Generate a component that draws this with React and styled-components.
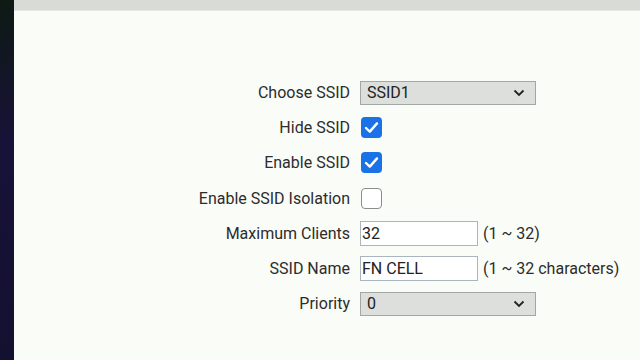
import React from 'react'
import styled, { createGlobalStyle } from 'styled-components'

const GlobalStyle = createGlobalStyle`
  html, body {
    margin: 0;
    padding: 0;
    background: #fafcf8;
  }
  body {
    font-family: Roboto, "Noto Sans", sans-serif;
    color: #2a2a2a;
  }
`

const Screen = styled.div`
  display: flex;
  width: 640px;
  height: 360px;
  overflow: hidden;
`

const Edge = styled.div`
  width: 14px;
  flex-shrink: 0;
  background: linear-gradient(180deg, #0e1a14 0%, #171238 40%, #141030 100%);
`

const Main = styled.div`
  flex: 1;
  display: flex;
  flex-direction: column;
  background: #fafcf8;
`

const TopBar = styled.div`
  height: 10px;
  background: #d8dbd6;
  border-bottom: 1px solid #e4e7e2;
`

const Form = styled.div`
  display: grid;
  grid-template-columns: 336px 1fr;
  grid-auto-rows: 35.2px;
  column-gap: 10px;
  align-items: center;
  margin-top: 64px;
`

const Label = styled.div`
  justify-self: end;
  font-size: 16px;
  color: #2c2c2c;
  white-space: nowrap;
`

const Field = styled.div`
  display: flex;
  align-items: center;
  gap: 5px;
`

const Select = styled.div`
  box-sizing: border-box;
  width: 176px;
  height: 24px;
  display: flex;
  align-items: center;
  justify-content: space-between;
  padding: 0 10px 0 6px;
  background: #dcdfdb;
  border: 1px solid #a3a7a3;
  font-size: 16px;
  color: #222;
`

const Input = styled.div`
  box-sizing: border-box;
  width: 118px;
  height: 25px;
  display: flex;
  align-items: center;
  padding: 0 1px;
  background: #fff;
  border: 1px solid #a9b6c0;
  font-size: 16px;
  color: #222;
`

const Hint = styled.span`
  font-size: 16px;
  color: #2c2c2c;
`

const Box = styled.div`
  box-sizing: border-box;
  width: 21px;
  height: 21px;
  margin-left: 1px;
  border-radius: 4px;
  display: flex;
  align-items: center;
  justify-content: center;
  background: ${p => (p.$checked ? '#1b72e6' : '#fff')};
  border: ${p => (p.$checked ? 'none' : '1.5px solid #8a8d8a')};
`

const Chevron = () => (
  <svg width="12" height="8" viewBox="0 0 12 8">
    <path d="M1.5 1.5 L6 6 L10.5 1.5" fill="none" stroke="#222" strokeWidth="1.8" />
  </svg>
)

const Check = () => (
  <svg width="15" height="13" viewBox="0 0 15 13">
    <path d="M2 7 L5.8 10.6 L13 2.4" fill="none" stroke="#fff" strokeWidth="2.4" strokeLinecap="round" strokeLinejoin="round" />
  </svg>
)

export default function App() {
  return (
    <>
      <GlobalStyle />
      <Screen>
        <Edge />
        <Main>
          <TopBar />
          <Form>
            <Label>Choose SSID</Label>
            <Field>
              <Select>
                SSID1
                <Chevron />
              </Select>
            </Field>

            <Label>Hide SSID</Label>
            <Field>
              <Box $checked>
                <Check />
              </Box>
            </Field>

            <Label>Enable SSID</Label>
            <Field>
              <Box $checked>
                <Check />
              </Box>
            </Field>

            <Label>Enable SSID Isolation</Label>
            <Field>
              <Box />
            </Field>

            <Label>Maximum Clients</Label>
            <Field>
              <Input>32</Input>
              <Hint>(1 ~ 32)</Hint>
            </Field>

            <Label>SSID Name</Label>
            <Field>
              <Input>FN CELL</Input>
              <Hint>(1 ~ 32 characters)</Hint>
            </Field>

            <Label>Priority</Label>
            <Field>
              <Select>
                0
                <Chevron />
              </Select>
            </Field>
          </Form>
        </Main>
      </Screen>
    </>
  )
}
